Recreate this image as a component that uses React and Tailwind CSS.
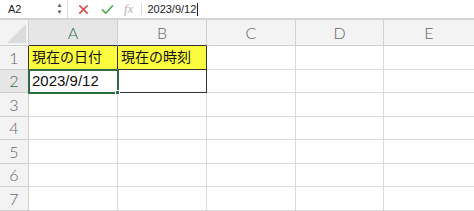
const cols = ["A", "B", "C", "D", "E"];
const rowHeights = ["h-[24px]", "h-[23px]", "h-[24px]", "h-[23px]", "h-[24px]", "h-[23px]", "h-[24px]"];

const font = { fontFamily: '"Liberation Sans", "Noto Sans CJK JP", sans-serif' };
const headFont = { fontFamily: 'Lato, "Liberation Sans", sans-serif' };

const Cell = ({ children, className = "" }) => (
  <div className={`flex items-center border-b border-r ${className}`}>{children}</div>
);

const FormulaBar = () => (
  <div className="flex h-[20px] items-center border-b-2 border-[#d4d4d4] bg-white text-[11px] text-[#222]">
    <div className="w-[52px] pl-[8px]">A2</div>
    <div className="flex w-[15px] flex-col items-center text-[6px] leading-[7px] text-[#555]">
      <span>▲</span>
      <span>▼</span>
    </div>
    <div className="h-[18px] w-px bg-[#dcdcdc]" />
    <svg viewBox="0 0 12 12" className="ml-[10px] h-[11px] w-[11px]">
      <path d="M2 2l8 8M10 2l-8 8" stroke="#d9534f" strokeWidth="1.8" strokeLinecap="round" />
    </svg>
    <svg viewBox="0 0 14 12" className="ml-[12px] h-[11px] w-[13px]">
      <path d="M1.5 6.5l3.5 3.5L12.5 2" stroke="#5cab5c" strokeWidth="1.8" fill="none" strokeLinecap="round" strokeLinejoin="round" />
    </svg>
    <span className="ml-[10px] text-[13px] italic text-[#b5b5b5]" style={{ fontFamily: '"Liberation Serif", serif' }}>
      fx
    </span>
    <div className="ml-[8px] h-[12px] w-px bg-[#d8d8d8]" />
    <span className="ml-[5px]">2023/9/12</span>
    <span className="ml-px h-[13px] w-px bg-[#222]" />
  </div>
);

export default function App() {
  return (
    <div className="relative h-[211px] w-[474px] overflow-hidden bg-white" style={font}>
      <FormulaBar />
      <div className="grid grid-cols-[29px_89px_89px_89px_88px_1fr]">
        <div className="relative h-[26px] border-b border-r border-[#d0d0d0] bg-[#f3f3f3]">
          <svg viewBox="0 0 20 20" className="absolute bottom-[2px] right-[2px] h-[19px] w-[19px]">
            <path d="M20 0L20 20L0 20Z" fill="#dcdcdc" />
          </svg>
        </div>
        {cols.map((c, i) => (
          <div
            key={c}
            style={headFont}
            className={`flex h-[26px] items-center justify-center border-b border-r text-[16px] font-light ${
              i === 0 ? "bg-[#e6e6e6] text-[#2f6a45]" : "bg-[#f3f3f3] text-[#666]"
            } ${i <= 1 ? "border-b-[#333] border-r-[#d0d0d0]" : "border-[#d0d0d0]"} ${i === 4 ? "border-r-0" : ""}`}
          >
            {c}
          </div>
        ))}

        {rowHeights.map((h, r) => (
          <div key={r} className="contents">
            <div
              style={headFont}
              className={`flex ${h} items-center justify-center border-b border-r text-[16px] font-light ${
                r === 1 ? "bg-[#e6e6e6] text-[#2f6a45]" : "bg-[#f3f3f3] text-[#666]"
              } ${r <= 1 ? "border-b-[#d0d0d0] border-r-[#333]" : "border-[#d0d0d0]"}`}
            >
              {r + 1}
            </div>
            {cols.map((c, ci) => (
              <Cell
                key={c}
                className={`${h} pl-[3px] text-[14px] text-[#111] ${
                  r <= 1 && ci <= 1 ? "border-[#333]" : "border-[#dadada]"
                } ${r === 0 && ci <= 1 ? "bg-[#fcfc3e]" : ""} ${ci === 4 ? "border-r-0" : ""}`}
              >
                {r === 0 && ci === 0 && "現在の日付"}
                {r === 0 && ci === 1 && "現在の時刻"}
                {r === 1 && ci === 0 && <span className="text-[15px]">2023/9/12</span>}
              </Cell>
            ))}
          </div>
        ))}
      </div>
      {/* active cell A2 */}
      <div className="pointer-events-none absolute left-[28px] top-[69px] h-[25px] w-[91px] border-2 border-[#2e6b45]">
        <span className="absolute -bottom-[3px] -right-[3px] h-[5px] w-[5px] border border-white bg-[#2e6b45]" />
      </div>
    </div>
  );
}
